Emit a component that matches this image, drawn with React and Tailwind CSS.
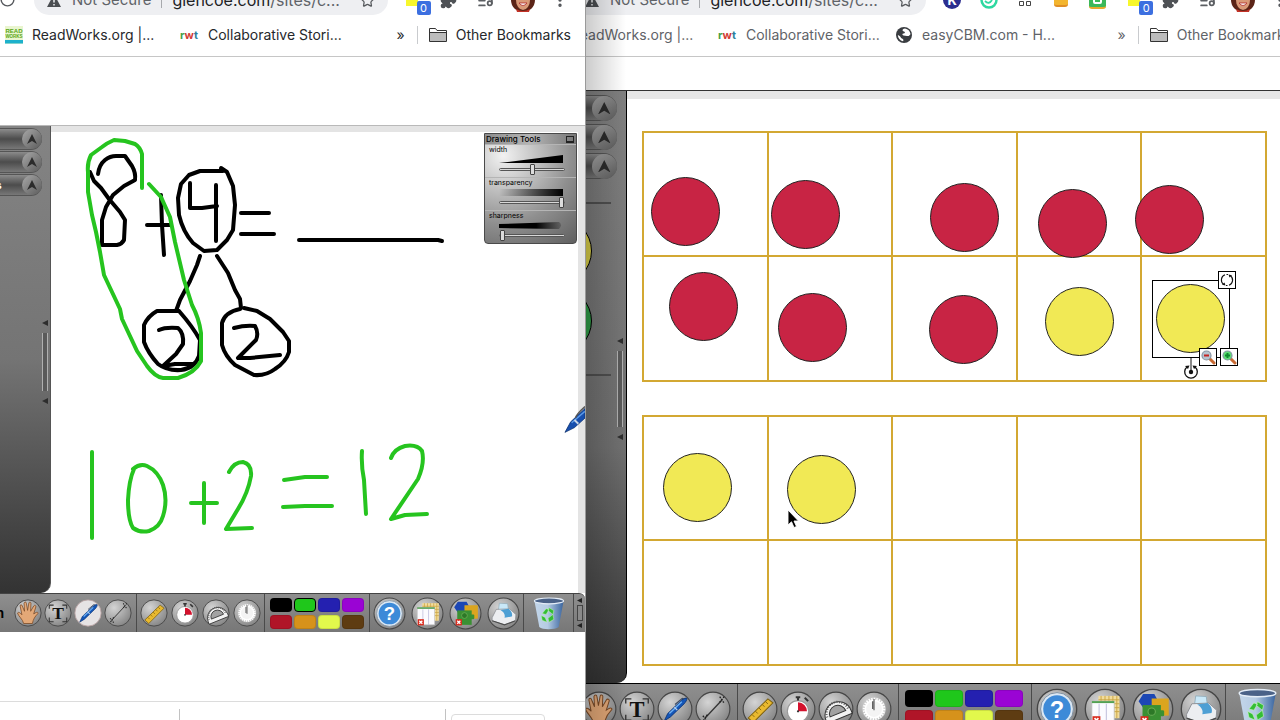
import { Star, Puzzle, ListMusic, MoreVertical, RotateCw } from 'lucide-react'
import clsx from 'clsx'

const SWATCHES = [
  { name: 'Black', color: 'bg-black' },
  { name: 'Green', color: 'bg-[#1fc71b]' },
  { name: 'Blue', color: 'bg-[#2420b0]' },
  { name: 'Purple', color: 'bg-[#9a04d4]' },
  { name: 'Red', color: 'bg-[#b01528]' },
  { name: 'Orange', color: 'bg-[#d6921b]' },
  { name: 'Yellow', color: 'bg-[#e2f84c]' },
  { name: 'Brown', color: 'bg-[#5e3c12]' },
]

// Counter centres, measured from the canvas corner
const COUNTERS = [
  { x: 59, y: 122, color: 'bg-[#c82444]' },
  { x: 179, y: 125, color: 'bg-[#c82444]' },
  { x: 338, y: 128, color: 'bg-[#c82444]' },
  { x: 446, y: 134, color: 'bg-[#c82444]' },
  { x: 543, y: 130, color: 'bg-[#c82444]' },
  { x: 77, y: 217, color: 'bg-[#c82444]' },
  { x: 186, y: 238, color: 'bg-[#c82444]' },
  { x: 337, y: 240, color: 'bg-[#c82444]' },
  { x: 453, y: 232, color: 'bg-[#f1e955]' },
  { x: 564, y: 229, color: 'bg-[#f1e955]' },
  { x: 71, y: 398, color: 'bg-[#f1e955]' },
  { x: 195, y: 400, color: 'bg-[#f1e955]' },
]

/* ---------- tool icons ---------- */

function Disc({ children, light }) {
  return (
    <svg viewBox="0 0 32 32" className="w-full h-full">
      <defs>
        <radialGradient id="disc" cx="35%" cy="30%" r="75%">
          <stop offset="0" stopColor="#d4d4d4" />
          <stop offset="1" stopColor="#858585" />
        </radialGradient>
      </defs>
      <circle cx="16" cy="16" r="15" fill={light ? '#e6e3e4' : 'url(#disc)'} stroke={light ? '#b9a3a3' : '#454545'} strokeWidth="1" />
      {children}
    </svg>
  )
}

function HandIcon() {
  return (
    <Disc>
      <path
        d="M11 28 C10 23 5 20 4 16 C5 14.500 7 15.500 9 18 L7 8 C7 6 9 6 9.500 8 L12 14 L11.500 5 C12 3 14 3 14.200 5 L15.500 13 L17 4.500 C17.500 3 19.500 3.500 19.400 5 L19 14 L22.500 8 C23.500 6.500 25.500 7.500 25 9 L22.500 17 L25 15.500 C27 14.500 28 16 27 17 C24 20 22 23 21 28 Z"
        fill="#e3a877"
        stroke="#7b4a26"
        strokeWidth="0.9"
      />
    </Disc>
  )
}

function TextIcon() {
  return (
    <Disc>
      <path d="M6 11 V7 H11 M21 7 H26 V11 M6 21 V26 H11 M21 26 H26 V21" fill="none" stroke="#333" strokeWidth="1.200" />
      <text x="16" y="23" textAnchor="middle" fontFamily="Liberation Serif, serif" fontWeight="bold" fontSize="20" fill="#111">T</text>
    </Disc>
  )
}

function PenIcon({ active }) {
  return (
    <Disc light={active}>
      <path d="M6.500 26.500 L9.500 20 L22 8 C24 6.500 26 6 26.500 6.500 C27 7.500 25.500 10 24 11.500 L12 23 Z" fill="#1456b8" stroke="#0b2f6d" strokeWidth="0.700" />
      <path d="M11 20 L22 9.500" stroke="#6fb1f3" strokeWidth="1.200" />
      <path d="M15.500 14.500 L18 17" stroke="#b9cfe8" strokeWidth="1.200" />
      <path d="M16 12 L22.500 6.500 L24 7" fill="none" stroke="#3c4b63" strokeWidth="1" />
    </Disc>
  )
}

function LineIcon() {
  return (
    <Disc>
      <path d="M9 24 L24 8" stroke="#333" strokeWidth="1.100" />
      <path d="M22 5 L26 11 M26 5 L22 10 M7 22 L11 27 M11 21 L7 27" stroke="#222" strokeWidth="1.200" strokeDasharray="1.500 1" />
    </Disc>
  )
}

function RulerIcon() {
  return (
    <Disc>
      <path d="M5.500 24 L23 7 L27.500 10.500 L10 28 Z" fill="#e9b92f" stroke="#7d6110" strokeWidth="0.900" />
      <path d="M9 21 l2 2 M12 18 l2 2 M15 15 l2 2 M18 12 l2 2 M21 9.500 l2 2" stroke="#7d6110" strokeWidth="0.800" />
    </Disc>
  )
}

function TimerIcon() {
  return (
    <Disc>
      <circle cx="16" cy="18" r="9.500" fill="#fff" stroke="#999" />
      <path d="M16 18 V10 A8 8 0 0 1 24 18 Z" fill="#d3122d" />
      <path d="M14 5.500 h4 M16 5.500 v3 M22 6 l3 3" stroke="#333" strokeWidth="1.800" fill="none" />
      <circle cx="16" cy="18" r="1" fill="#333" />
    </Disc>
  )
}

function ProtractorIcon() {
  return (
    <Disc>
      <g transform="rotate(-22 16 16)">
        <path d="M4 22 A12 12 0 0 1 28 22 V25 H4 Z" fill="#f3f3f3" stroke="#333" strokeWidth="0.900" />
        <path d="M8.500 20.500 A7.500 7.500 0 0 1 23.500 20.500 Z" fill="#a2a2a2" stroke="#333" strokeWidth="0.900" />
        <path d="M6 20 A10 10 0 0 1 26 20" fill="none" stroke="#555" strokeWidth="2" strokeDasharray="0.800 1.500" />
      </g>
    </Disc>
  )
}

function ClockIcon() {
  return (
    <Disc>
      <circle cx="16" cy="16" r="10.500" fill="#c9c9c9" />
      <circle cx="16" cy="16" r="8.500" fill="#fff" stroke="#fff" strokeWidth="3" strokeDasharray="1.200 1" />
      <circle cx="16" cy="16" r="7" fill="#f4f4f4" />
      <path d="M16 7 V17 M14.800 9 V16" stroke="#555" strokeWidth="1" />
    </Disc>
  )
}

function HelpIcon() {
  return (
    <Disc>
      <circle cx="16" cy="16" r="12.500" fill="#dbe8f4" stroke="#7b8b9c" strokeWidth="0.700" />
      <circle cx="16" cy="16" r="10.500" fill="#3d8ad8" />
      <text x="16" y="22.500" textAnchor="middle" fontFamily="Liberation Sans, sans-serif" fontWeight="bold" fontSize="18" fill="#fff">?</text>
    </Disc>
  )
}

function ClearMark() {
  return (
    <>
      <rect x="6.500" y="21.500" width="6" height="6" fill="#d92a1c" />
      <path d="M8 23 l3 3 M11 23 l-3 3" stroke="#fff" strokeWidth="1.300" />
    </>
  )
}

function GridIcon() {
  return (
    <Disc>
      <rect x="11" y="6" width="16" height="17" fill="#f2dc9c" />
      <path d="M13 6 V23 M16 6 V23 M19 6 V23 M22 6 V23 M25 6 V23 M11 9 H27 M11 12 H27 M11 15 H27 M11 18 H27" stroke="#c9a341" strokeWidth="0.700" />
      <rect x="6" y="10" width="17" height="17" fill="#fbfbff" stroke="#bbb" strokeWidth="0.600" />
      <rect x="6" y="10" width="17" height="1.500" fill="#53a153" />
      <path d="M11.500 12 V27 M17 12 V27" stroke="#b9b9d8" strokeWidth="0.700" />
      <ClearMark />
    </Disc>
  )
}

function BlocksIcon() {
  return (
    <Disc>
      <path d="M5 10 L8.500 4.500 H17 L20 10 L17 15 H8.500 Z" fill="#1c47b4" />
      <rect x="15" y="8" width="13" height="13" fill="#dba51f" />
      <rect x="8" y="13" width="14" height="14" fill="#3a9033" />
      <circle cx="15" cy="18" r="2.800" fill="#2d7827" stroke="#69ae55" strokeWidth="0.800" />
      <rect x="20.500" y="17" width="4" height="4.500" rx="1" fill="#3a9033" />
      <ClearMark />
    </Disc>
  )
}

function PrintIcon() {
  return (
    <Disc>
      <path d="M11 13 L12 6 L20 6.500 L21 14 Z" fill="#c9e8f8" stroke="#8ba7b5" strokeWidth="0.600" />
      <path d="M5 20 L9 12 L22 11.500 L28 17 L27.500 23 L17 27 L5 23 Z" fill="#eceef1" stroke="#8a8d92" strokeWidth="0.700" />
      <path d="M13 12.500 L21 11.500 C24 14 25 17 24 19 L17 20 C18 17 16 14 13 12.500 Z" fill="#4d9fd4" />
      <path d="M5 23 L17 27 L27.500 23" fill="none" stroke="#4b4b4b" strokeWidth="1.100" />
    </Disc>
  )
}

function TrashIcon() {
  return (
    <svg viewBox="0 0 32 34" className="w-full h-full">
      <defs>
        <linearGradient id="bin">
          <stop offset="0" stopColor="#c3d6ea" />
          <stop offset="0.450" stopColor="#b5cbe3" />
          <stop offset="1" stopColor="#38649f" />
        </linearGradient>
      </defs>
      <path d="M1 4 L6 31 C9 34 22 34 26 31 L31 4 Z" fill="url(#bin)" />
      <ellipse cx="16" cy="4" rx="15" ry="3" fill="#4a6288" stroke="#e4edf7" strokeWidth="1.200" />
      <path d="M9 17 L13 12 L16 13 L13 18 Z M16 11 L21 14 L20 18 L15 14 Z M20 18 L21 23 L16 26 L15 22 Z M14 26 L9 24 L8 19 L12 21 Z" fill="#34bd35" stroke="#c9f5bb" strokeWidth="0.500" />
    </svg>
  )
}

const DRAW_TOOLS = [
  { name: 'Move', Icon: HandIcon },
  { name: 'Text', Icon: TextIcon },
  { name: 'Pen', Icon: PenIcon },
  { name: 'Line', Icon: LineIcon },
]

const MEASURE_TOOLS = [
  { name: 'Ruler', Icon: RulerIcon },
  { name: 'Timer', Icon: TimerIcon },
  { name: 'Protractor', Icon: ProtractorIcon },
  { name: 'Clock', Icon: ClockIcon },
]

const PAGE_TOOLS = [
  { name: 'Help', Icon: HelpIcon },
  { name: 'Clear backgrounds', Icon: GridIcon },
  { name: 'Clear manipulatives', Icon: BlocksIcon },
  { name: 'Print', Icon: PrintIcon },
]

function ToolGroup({ tools, size, active, className }) {
  return (
    <div className={clsx('flex items-center shrink-0 border-r border-[#4a4a4a]', className)}>
      {tools.map(({ name, Icon }) => (
        <button key={name} type="button" aria-label={name} className={clsx('shrink-0', size)}>
          <Icon active={active === name} />
        </button>
      ))}
    </div>
  )
}

function Swatches({ size, selected, className }) {
  return (
    <div className={clsx('grid grid-cols-4 content-center shrink-0 border-r border-[#4a4a4a] gap-x-[2px] gap-y-[3px]', className)}>
      {SWATCHES.map(({ name, color }) => (
        <button
          key={name}
          type="button"
          aria-label={name}
          className={clsx('rounded-[4px] border', size, color, selected === name ? 'border-black' : 'border-black/10')}
        />
      ))}
    </div>
  )
}

/* ---------- browser chrome ---------- */

function AddressPill({ className }) {
  return (
    <div className={clsx('h-[30px] w-[354px] shrink-0 rounded-full bg-[#eeeff2] flex items-center pl-[13px] pr-[13px] text-[15px]', className)}>
      <svg viewBox="0 0 14 13" className="w-[14px] h-[13px] shrink-0">
        <path d="M7 0 L14 13 H0 Z" fill="#4b4e52" />
        <path d="M7 4 V8.500 M7 10 V11.500" stroke="#eeeff2" strokeWidth="1.500" />
      </svg>
      <span className="ml-[11px] text-[#5f6368]">Not Secure</span>
      <span className="mx-[10px] w-px h-[16px] bg-[#a7a9ad]" />
      <span className="text-[16px] text-[#5f6368] whitespace-nowrap"><span className="text-[#202124]">glencoe.com</span>/sites/c...</span>
      <Star className="ml-auto size-[15px] shrink-0 text-[#55585c]" strokeWidth={2} />
    </div>
  )
}

function Slot({ children }) {
  return <div className="flex-1 h-[30px] flex items-center justify-center">{children}</div>
}

function Extensions({ className, children }) {
  return (
    <div className={clsx('flex flex-1', className)}>
      {children}
      <Slot>
        <span className="relative size-[12px] bg-[#f7f72c]">
          <span className="absolute left-[11px] top-[7px] w-[14px] h-[14px] rounded-[2px] bg-[#3c6fe0] text-white text-[11px] leading-[14px] text-center">0</span>
        </span>
      </Slot>
      <Slot><Puzzle className="size-[17px] text-[#4f5256]" fill="#4f5256" /></Slot>
      <Slot><ListMusic className="size-[17px] text-[#5b5e62]" strokeWidth={2.500} /></Slot>
      <Slot>
        <svg viewBox="0 0 24 24" className="size-[24px] shrink-0">
          <circle cx="12" cy="12" r="12" fill="#5b2417" />
          <ellipse cx="12" cy="12" rx="7" ry="10" fill="#d99a78" />
          <path d="M8 15 Q12 20 16 15 Z" fill="#fff" stroke="#b02a2a" strokeWidth="0.800" />
          <path d="M5 21 Q12 25 19 21 L18 24 H6 Z" fill="#c33227" />
        </svg>
      </Slot>
      <Slot><MoreVertical className="size-[18px] text-[#4f5256]" strokeWidth={2.500} /></Slot>
    </div>
  )
}

function ReadWorksLogo() {
  return (
    <svg viewBox="0 0 18 18" className="size-[18px] shrink-0">
      <rect width="18" height="18" fill="#e9f5cf" />
      <text x="9" y="6.500" textAnchor="middle" fontFamily="Liberation Sans, sans-serif" fontWeight="bold" fontSize="6" fill="#59a615">READ</text>
      <text x="9" y="12" textAnchor="middle" fontFamily="Liberation Sans, sans-serif" fontWeight="bold" fontSize="4.500" fill="#59a615">WORKS</text>
      <rect y="14" width="18" height="3.500" fill="#1db1cc" />
    </svg>
  )
}

function RwtLogo() {
  return (
    <span className="w-[20px] shrink-0 text-[11px] leading-4 font-bold">
      <span className="text-[#45a047]">r</span>
      <span className="text-[#d23c36]">w</span>
      <span className="text-[#2a7f9b]">t</span>
    </span>
  )
}

function GlobeLogo() {
  return (
    <svg viewBox="0 0 16 16" className="size-[16px] shrink-0">
      <circle cx="8" cy="8" r="8" fill="#3a3d41" />
      <path d="M9 1.500 C6 2 6 4 8 4.500 C9.500 5 9 6.500 7.500 6.500 C6 6.500 6 8 7.500 8.500 L11 9 C13 9.500 14 8 14.500 7 C14 4 12 2 9 1.500 Z M1.800 8 C2 11 4 13.500 7 14.300 C8 13 7 12 6 11.500 C4.500 11 5 9 1.800 8 Z" fill="#fff" />
    </svg>
  )
}

function Bookmark({ icon, className, children }) {
  return (
    <a href="#" className={clsx('flex items-center shrink-0 whitespace-nowrap', className)}>
      {icon}
      {children}
    </a>
  )
}

function OtherBookmarks({ className }) {
  return (
    <div className={clsx('ml-auto flex items-center shrink-0 whitespace-nowrap', className)}>
      <button type="button" aria-label="More bookmarks" className="text-[14px] leading-5">»</button>
      <span className="ml-[12px] w-px h-[18px] bg-[#c9cbce]" />
      <a href="#" className="ml-[11px] flex items-center gap-[9px]">
        <svg viewBox="0 0 18 14" className="w-[18px] h-[14px]">
          <path d="M0.500 13.500 V0.500 H6.500 L8 2.500 H17.500 V13.500 Z" fill="#fff" stroke="#333" />
          <path d="M1 5 H17 V13 H1 Z" fill="#bcbcbc" />
          <path d="M0.500 4.500 H17.500" stroke="#333" />
        </svg>
        Other Bookmarks
      </a>
    </div>
  )
}

/* ---------- drawing board parts ---------- */

function Drawer({ size, className, children }) {
  return (
    <button
      type="button"
      aria-label="Expand section"
      className={clsx('w-full rounded-r-full flex items-center justify-end bg-linear-to-b from-[#8c8c8c] via-[#4c4c4c] to-[#787878] border-y border-[#555]', className)}
    >
      {children}
      <span className={clsx('rounded-full bg-linear-to-br from-[#a9a9a9] to-[#5b5b5b] flex items-center justify-center shrink-0', size)}>
        <svg viewBox="0 0 12 12" className="w-1/2 h-1/2">
          <path d="M6 0 L12 12 L6 8.500 L0 12 Z" fill="#2b2b2b" />
        </svg>
      </span>
    </button>
  )
}

function Grip({ bars, className }) {
  return (
    <div className={clsx('flex flex-col items-center gap-[7px]', className)}>
      <svg viewBox="0 0 6 6" className="size-[6px]"><path d="M0 3 L6 0 V6 Z" fill="#2d2d2d" /></svg>
      <span className={clsx('w-[6px] border-x border-[#b0b0b0] bg-[#5a5a5a]', bars)} />
      <svg viewBox="0 0 6 6" className="size-[6px]"><path d="M0 3 L6 0 V6 Z" fill="#2d2d2d" /></svg>
    </div>
  )
}

function ToolSlider({ id, label, value, children }) {
  return (
    <div className="h-[33px] px-[4px] pt-px border-t border-[#b5b5b5] first-of-type:border-t-0">
      <label htmlFor={id} className="block text-[7px] leading-[8px]">{label}</label>
      <div className="pl-[10px] pr-[7px]">
        <svg viewBox="0 0 64 8" preserveAspectRatio="none" className="block w-[64px] h-[8px] mt-px">
          {children}
        </svg>
        <input
          id={id}
          type="range"
          defaultValue={value}
          className="block w-full h-[11px] mt-px appearance-none bg-transparent [&::-webkit-slider-runnable-track]:h-[3px] [&::-webkit-slider-runnable-track]:rounded-full [&::-webkit-slider-runnable-track]:border [&::-webkit-slider-runnable-track]:border-[#555] [&::-webkit-slider-runnable-track]:bg-[#d8d8d8] [&::-webkit-slider-thumb]:appearance-none [&::-webkit-slider-thumb]:w-[5px] [&::-webkit-slider-thumb]:h-[11px] [&::-webkit-slider-thumb]:-mt-[5px] [&::-webkit-slider-thumb]:rounded-[1px] [&::-webkit-slider-thumb]:border [&::-webkit-slider-thumb]:border-[#444] [&::-webkit-slider-thumb]:bg-[#dcdcdc]"
        />
      </div>
    </div>
  )
}

function DrawingTools() {
  return (
    <section className="absolute right-[8px] top-[7px] w-[93px] rounded-b-[4px] border border-[#4a4a4a] overflow-hidden bg-[radial-gradient(circle_at_20%_20%,#f2f2f2,#8f8f8f_60%,#5f5f5f)] text-black">
      <div className="h-[10px] flex items-center justify-between pl-px pr-[2px] bg-linear-to-r from-[#8d8d8d] via-[#b5b5b5] to-[#777]">
        <h2 className="text-[8px] leading-[9px] font-medium whitespace-nowrap">Drawing Tools</h2>
        <button type="button" aria-label="Minimize" className="w-[8px] h-[7px] border border-[#222] border-b-2" />
      </div>
      <ToolSlider id="width" label="width" value={50}>
        <path d="M0 8 L64 0 V8 Z" />
      </ToolSlider>
      <ToolSlider id="transparency" label="transparency" value={100}>
        <defs><linearGradient id="fade"><stop offset="0" stopOpacity="0" /><stop offset="1" /></linearGradient></defs>
        <rect y="1" width="64" height="7" fill="url(#fade)" />
      </ToolSlider>
      <ToolSlider id="sharpness" label="sharpness" value={0}>
        <defs><linearGradient id="soft"><stop offset="0.600" /><stop offset="1" stopOpacity="0.200" /></linearGradient></defs>
        <path d="M0 3 L60 1 Q64 4 60 8 L0 7 Z" fill="url(#soft)" />
      </ToolSlider>
    </section>
  )
}

function Handwriting() {
  return (
    <svg viewBox="51 132 527 461" className="block w-[527px] h-[461px]" fill="none" strokeWidth="4" strokeLinecap="round" strokeLinejoin="round">
      <g stroke="#000">
        {/* 8 + */}
        <path d="M98 174 Q99 165 105 160 Q110 156 116 156 H125 L132 166 Q136 173 135 180 L124 186 L113 195 L106 207 L102 220 V245 H117 Q122 244 124 240 L125 220 L120 212 L109 199 L101 188 L94 181 L90 172" />
        <path d="M147 225 H170 M161 195 L162 225 L164 255" />
        {/* circled 4 = */}
        <path d="M221 168 L227 172 L233 186 L235 205 L233 230 L227 240 L217 250 L204 251 L193 243 Q183 232 179 215 L178 198 L181 184 L189 175 L200 171 H223" />
        <path d="M190 183 V208 H202 L217 206 M216 185 V241" />
        <path d="M241 213 H269 M241 234 H274" />
        <path d="M299 240 L360 240 L420 240 H438 L442 241" />
        {/* number bond */}
        <path d="M200 256 L197 265 L190 281 L180 300 L176 311" />
        <path d="M217 256 L228 273 L235 290 L240 299 L241 308" />
        <path d="M179 311 H157 Q148 316 144 325 L144 342 Q148 353 158 364 Q167 371 181 370 Q195 368 199 356 L200 340 Q193 327 179 311" />
        <path d="M159 330 Q165 327 178 328 Q184 333 183 344 L176 354 L163 366 L175 364 H193" />
        <path d="M244 308 L257 311 L270 319 L283 332 L289 341 V352 Q286 362 275 369 Q266 376 254 375 L235 365 Q225 356 222 345 V323 Q225 312 240 309" />
        <path d="M234 328 Q245 325 255 326 Q259 333 256 340 L238 358 L250 358 L280 355" />
      </g>
      <g stroke="#26c41f">
        <path d="M142 188 V154 Q140 147 135 144 L125 141 L114 140 Q107 143 102 147 L91 155 Q87 163 88 172 L88 192 L92 215 L96 232 L100 252 L104 275 L112 292 L120 309 L122 319 L137 351 L147 366 Q155 377 163 378 H178 Q195 373 201 361 V333 Q199 318 192 305 L184 280 L175 242 L170 217 L161 197 L149 184" />
        <path d="M92 452 V480 L92 538" />
        <path d="M134 469 Q129 480 128 500 Q128 520 133 528 Q140 533 149 531 Q160 527 163 516 Q168 500 163 485 Q158 471 147 466 Q140 463 133 469" />
        <path d="M191 503 H217 M204 483 V523" />
        <path d="M229 472 Q234 462 243 462 Q252 464 251 476 Q248 493 238 509 L226 529 L252 528" />
        <path d="M284 480 L305 477 H327 M283 507 L305 506 H332" />
        <path d="M362 451 Q361 465 364 480 L366 514" />
        <path d="M391 458 Q394 449 405 446 Q417 444 422 451 Q425 463 418 479 L391 519 L405 515 L427 514" />
      </g>
    </svg>
  )
}

function NumberWindow() {
  return (
    <div className="relative z-10 min-w-0 overflow-hidden bg-white text-[#26282b] flex flex-col border-r border-[#9a9a9a]">
      <header className="border-b border-[#c6c6c6]">
        <div className="h-[15px] flex items-end">
          <div className="w-[34px] shrink-0 h-[24px] flex">
            <RotateCw className="-ml-px size-[17px] text-[#55585c]" />
          </div>
          <AddressPill />
          <Extensions className="pl-[5px] pr-[7px]" />
        </div>
        <nav aria-label="Bookmarks" className="h-[41px] pb-[2px] flex items-center text-[14px] leading-5 pl-[5px]">
          <Bookmark className="w-[175px] gap-[9px]" icon={<ReadWorksLogo />}>ReadWorks.org |...</Bookmark>
          <Bookmark className="gap-[8px]" icon={<RwtLogo />}>Collaborative Stori...</Bookmark>
          <OtherBookmarks className="pr-[14px]" />
        </nav>
      </header>

      <div className="mt-[68px] shrink-0 flex border-t border-[#b9b9b9]">
        <aside className="w-[51px] shrink-0 flex border-r border-[#555] rounded-br-[10px] bg-linear-to-b from-[#848484] via-[#747474] to-[#333]">
          <div className="w-[42px] pt-[2px] flex flex-col gap-px text-white">
            <Drawer className="h-[22px]" size="size-[20px]" />
            <Drawer className="h-[22px]" size="size-[20px]" />
            <Drawer className="h-[22px]" size="size-[20px]">
              <span className="mr-auto text-[10px] font-bold leading-4 -ml-[4px]">s</span>
            </Drawer>
          </div>
          <Grip className="mt-[194px]" bars="h-[58px]" />
        </aside>
        <main className="relative flex-1 min-w-0 border-t-[6px] border-r-[7px] border-[#e4e4e4]">
          <Handwriting />
        </main>
      </div>

      <div className="bg-linear-to-b from-[#8f8f8f] to-[#777] h-[39px] shrink-0 flex border-t border-[#444] rounded-tr-[6px] text-black">
        <span className="w-[14px] shrink-0 self-center text-[13px] leading-4 font-bold -indent-[4px]">n</span>
        <ToolGroup tools={DRAW_TOOLS} size="size-[28px]" active="Pen" className="gap-[2px] pr-[4px]" />
        <ToolGroup tools={MEASURE_TOOLS} size="size-[28px]" className="gap-[3px] px-[3px]" />
        <Swatches size="w-[22px] h-[14px]" selected="Green" className="px-[5px]" />
        <ToolGroup tools={PAGE_TOOLS} size="size-[33px]" className="gap-[5px] px-[3px]" />
        <div className="w-[50px] shrink-0 flex items-center justify-center border-r border-[#4a4a4a]">
          <button type="button" aria-label="Trash" className="w-[32px] h-[33px]"><TrashIcon /></button>
        </div>
        <div className="flex-1 flex flex-col items-center justify-center gap-[2px]">
          <svg viewBox="0 0 6 6" className="size-[5px]"><path d="M0 3 L6 0 V6 Z" fill="#222" /></svg>
          <span className="w-[6px] h-[16px] border border-[#444] bg-[#8a8a8a]" />
          <svg viewBox="0 0 6 6" className="size-[5px]"><path d="M0 3 L6 0 V6 Z" fill="#222" /></svg>
        </div>
      </div>

      <footer className="mt-[69px] shrink-0 border-t border-[#dcdcdc] h-[60px] pt-[7px] flex">
        <span className="w-[180px] h-[40px] border-r border-[#c2c2c2]" />
        <span className="w-[266px] h-[40px] border-r border-[#c2c2c2]" />
        <span className="ml-[5px] mt-[5px] w-[94px] h-[30px] rounded-[4px] border border-[#dcdcdc]" />
      </footer>

      <div className="absolute right-0 top-[126px]">
        <DrawingTools />
      </div>
      <svg viewBox="564 404 22 30" className="absolute right-0 top-[404px] w-[21px] h-[30px]">
        <path d="M565 433 L571 422 L586 408 V418 L575 428 Z" fill="#174fae" stroke="#0b2f6d" strokeWidth="0.800" />
        <path d="M572 423 L586 411" stroke="#5c9be8" strokeWidth="1.500" />
        <path d="M575 420 L579 424" stroke="#c9d6e6" strokeWidth="2" />
        <path d="M576 418 Q577 414 586 406" fill="none" stroke="#555" strokeWidth="1.500" />
      </svg>
    </div>
  )
}

function TenFrame() {
  return (
    <div className="grid grid-cols-5 grid-rows-[122px_123px] gap-[2px] p-[2px] bg-[#d3a832]">
      {Array.from({ length: 10 }, (_, i) => (
        <div key={i} className="bg-white" />
      ))}
    </div>
  )
}

function Magnifier({ color, plus }) {
  return (
    <svg viewBox="0 0 16 16" className="block w-full h-full">
      <path d="M9.500 9.500 L14 14" stroke="#c96a33" strokeWidth="3" strokeLinecap="round" />
      <circle cx="6.500" cy="6.500" r="4.500" fill={color} stroke="#8694a3" strokeWidth="1.200" />
      <path d={plus ? 'M4 6.500 H9 M6.500 4 V9' : 'M4 6.500 H9'} stroke={plus ? '#0d8a2c' : '#c22323'} strokeWidth="2" />
    </svg>
  )
}

function Selection() {
  return (
    <div className="absolute left-[525px] top-[189px] w-[78px] h-[78px] border border-black">
      <button type="button" aria-label="Reset" className="absolute -right-[7px] -top-[10px] size-[18px] bg-white border border-black">
        <svg viewBox="0 0 16 16" className="block w-full h-full">
          <path d="M6 2.800 A5.500 5.500 0 0 0 4.500 12.300 M10 13.200 A5.500 5.500 0 0 0 11.500 3.700 M7.500 2.500 H9 M7 13.500 H8.500" fill="none" stroke="#111" strokeWidth="1.100" />
          <path d="M3 12.800 L6.500 13.500 L5.500 10.500 Z M13 3.200 L9.500 2.500 L10.500 5.500 Z" fill="#111" />
        </svg>
      </button>
      <button type="button" aria-label="Smaller" className="absolute right-[12px] -bottom-[9px] size-[18px] bg-white border border-black">
        <Magnifier color="#b6c3cf" />
      </button>
      <button type="button" aria-label="Larger" className="absolute -right-[9px] -bottom-[9px] size-[18px] bg-white border border-black">
        <Magnifier color="#5ddb74" plus />
      </button>
      <svg viewBox="0 0 16 22" className="absolute left-[30px] top-[77px] w-[16px] h-[22px]">
        <path d="M8 0 V14" stroke="#111" />
        <circle cx="8" cy="14" r="2.200" fill="#111" />
        <path d="M4 9 A6.300 6.300 0 1 0 12 9" fill="none" stroke="#111" strokeWidth="1.300" />
        <path d="M2 8 L6.500 7.500 L5 11 Z M14 8 L9.500 7.500 L11 11 Z" fill="#111" />
      </svg>
    </div>
  )
}

function FrameWindow() {
  return (
    <div className="relative min-w-0 overflow-hidden bg-white text-[#5f6368] flex flex-col">
      <header className="border-b border-[#c6c6c6]">
        <div className="h-[15px] flex items-end">
          <AddressPill className="-ml-[14px]" />
          <Extensions className="pl-[8px] -mr-[18px]">
            <Slot><span className="size-[18px] rounded-full bg-[#2b2e8f] text-white text-[13px] leading-[18px] font-bold text-center">K</span></Slot>
            <Slot>
              <svg viewBox="0 0 18 18" className="size-[18px]">
                <circle cx="9" cy="9" r="7.500" fill="none" stroke="#2ed8a0" strokeWidth="2.500" />
                <path d="M5 10 Q9 14 12 9 M12 6 H8" fill="none" stroke="#2ed8a0" strokeWidth="1.800" />
              </svg>
            </Slot>
            <Slot>
              <svg viewBox="0 0 12 12" className="size-[12px]" fill="none" stroke="#444">
                <path d="M0.500 0.500 h4 v4 h-4 Z M7.500 0.500 h4 v4 h-4 Z M0.500 7.500 h4 v4 h-4 Z M7.500 7.500 h4 v4 h-4 Z" />
              </svg>
            </Slot>
            <Slot><span className="w-[14px] h-[14px] rounded-[3px] bg-[#f3b52e] border-b-2 border-[#e08e26]" /></Slot>
            <Slot>
              <span className="size-[17px] rounded-[3px] bg-[#3cb85a] border-b-2 border-[#e7ab2c] flex items-center justify-center">
                <span className="size-[9px] rounded-[2px] border-2 border-white" />
              </span>
            </Slot>
          </Extensions>
        </div>
        <nav aria-label="Bookmarks" className="h-[41px] pb-[2px] flex items-center text-[14px] leading-5 -ml-[15px]">
          <Bookmark className="w-[147px]">ReadWorks.org |...</Bookmark>
          <Bookmark className="w-[178px] gap-[8px]" icon={<RwtLogo />}>Collaborative Stori...</Bookmark>
          <Bookmark className="gap-[10px]" icon={<GlobeLogo />}>easyCBM.com - H...</Bookmark>
          <OtherBookmarks className="-mr-[12px]" />
        </nav>
      </header>

      <div className="mt-[33px] shrink-0 flex border-t border-[#333]">
        <aside className="w-[41px] shrink-0 flex border-r border-black rounded-br-[10px] bg-linear-to-b from-[#808080] via-[#707070] via-60% to-[#333]">
          <div className="w-[31px] pt-[4px] flex flex-col items-start overflow-hidden">
            <div className="w-full flex flex-col gap-[3px]">
              <Drawer className="h-[26px]" size="size-[25px]" />
              <Drawer className="h-[26px]" size="size-[25px]" />
              <Drawer className="h-[26px]" size="size-[25px]" />
            </div>
            <span className="mt-[23px] w-[25px] h-[2px] bg-[#4f4f4f]" />
            <span className="mt-[13px] -ml-[62px] size-[68px] rounded-full border border-black bg-[#d8ce48]" />
            <span className="mt-[2px] -ml-[62px] size-[68px] rounded-full border border-black bg-[#2f9c47]" />
            <span className="mt-[19px] w-[25px] h-[2px] bg-[#4f4f4f]" />
          </div>
          <Grip className="mt-[247px]" bars="h-[76px]" />
        </aside>
        <main className="relative flex-1 min-w-0 flex flex-col gap-[33px] border-t-[8px] border-[#e6e6e6] pt-[32px] pb-[17px] pl-[15px] pr-[13px]">
          <TenFrame />
          <TenFrame />
          <div className="absolute left-0 -top-[8px]">
            {COUNTERS.map(({ x, y, color }) => (
              <span
                key={`${x}-${y}`}
                className={clsx('absolute size-[69px] rounded-full border border-[#222]', color)}
                style={{ left: x - 35, top: y - 36 }}
              />
            ))}
            <Selection />
            <svg viewBox="0 0 12 20" className="absolute left-[160px] top-[418px] w-[12px] h-[20px]">
              <path d="M1 1 V16 L4.500 12.800 L7 18.500 L9.500 17.500 L7 12 H11.500 Z" fill="#000" stroke="#fff" strokeWidth="0.900" />
            </svg>
          </div>
        </main>
      </div>

      <div className="shrink-0 h-[50px] flex border-t border-black bg-linear-to-b from-[#8f8f8f] to-[#777] text-black">
        <ToolGroup tools={DRAW_TOOLS} size="size-[36px]" className="-ml-[5px] gap-[2px] pr-[6px]" />
        <ToolGroup tools={MEASURE_TOOLS} size="size-[36px]" className="gap-[2px] pl-[4px] pr-[6px]" />
        <Swatches size="w-[28px] h-[17px]" className="pl-[6px] pr-[8px]" />
        <ToolGroup tools={PAGE_TOOLS} size="size-[42px]" className="gap-[6px] pl-[4px] pr-[3px]" />
        <button type="button" aria-label="Trash" className="ml-[12px] shrink-0 self-center w-[39px] h-[42px]"><TrashIcon /></button>
      </div>

      {/* shade cast by the window in front */}
      <div className="pointer-events-none absolute inset-y-0 left-0 w-[40px] bg-linear-to-r from-black/20 to-transparent" />
    </div>
  )
}

export default function App() {
  return (
    <div className="h-screen overflow-hidden grid grid-rows-[100%] grid-cols-[586fr_694fr] bg-white font-['Inter','Liberation_Sans',sans-serif]">
      <NumberWindow />
      <FrameWindow />
    </div>
  )
}
